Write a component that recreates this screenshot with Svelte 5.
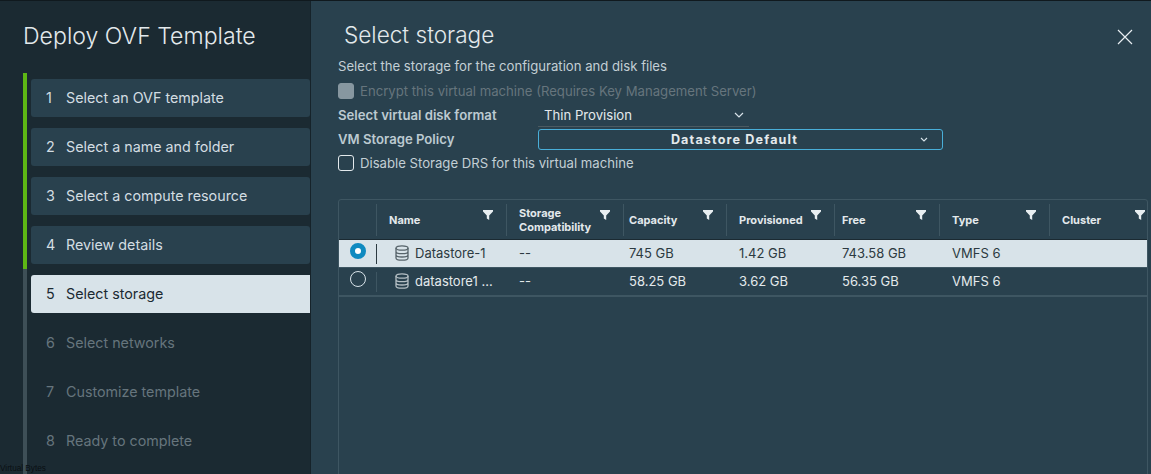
<script>
  const steps = [
    { n: 1, label: 'Select an OVF template', state: 'done' },
    { n: 2, label: 'Select a name and folder', state: 'done' },
    { n: 3, label: 'Select a compute resource', state: 'done' },
    { n: 4, label: 'Review details', state: 'done' },
    { n: 5, label: 'Select storage', state: 'current' },
    { n: 6, label: 'Select networks', state: 'todo' },
    { n: 7, label: 'Customize template', state: 'todo' },
    { n: 8, label: 'Ready to complete', state: 'todo' }
  ];
  const cols = [
    { label: 'Name', pad: 12 },
    { label: 'Storage Compatibility', pad: 12, two: true },
    { label: 'Capacity', pad: 5 },
    { label: 'Provisioned', pad: 12 },
    { label: 'Free', pad: 7 },
    { label: 'Type', pad: 12 },
    { label: 'Cluster', pad: 12 }
  ];
  const rows = [
    { name: 'Datastore-1', compat: '--', capacity: '745 GB', prov: '1.42 GB', free: '743.58 GB', type: 'VMFS 6', selected: true },
    { name: 'datastore1 ...', compat: '--', capacity: '58.25 GB', prov: '3.62 GB', free: '56.35 GB', type: 'VMFS 6', selected: false }
  ];
</script>

<div class="wizard">
  <aside class="side">
    <h1>Deploy OVF Template</h1>
    <ol class="steps">
      {#each steps as s}
        <li class="step {s.state}"><span class="num">{s.n}</span><span>{s.label}</span></li>
      {/each}
    </ol>
  </aside>

  <main class="main">
    <header class="head">
      <h2>Select storage</h2>
      <svg class="close" width="16" height="16" viewBox="0 0 16 16" aria-label="Close"><path d="M1 1l14 14M15 1L1 15" stroke="#e8eef1" stroke-width="1.2" fill="none"/></svg>
    </header>

    <div class="form">
      <p class="desc">Select the storage for the configuration and disk files</p>
      <div class="line disabled"><span class="box filled"></span><span>Encrypt this virtual machine (Requires Key Management Server)</span></div>
      <div class="line field">
        <span class="lbl">Select virtual disk format</span>
        <div class="sel plain"><span>Thin Provision</span>
          <svg width="10" height="6" viewBox="0 0 10 6"><path d="M1 1l4 4 4-4" stroke="#d8e3e9" stroke-width="1.2" fill="none"/></svg>
        </div>
      </div>
      <div class="line field">
        <span class="lbl">VM Storage Policy</span>
        <div class="sel policy"><span>Datastore Default</span>
          <svg width="8" height="5" viewBox="0 0 8 5"><path d="M1 1l3 3 3-3" stroke="#d8e3e9" stroke-width="1.1" fill="none"/></svg>
        </div>
      </div>
      <div class="line"><span class="box"></span><span class="drs">Disable Storage DRS for this virtual machine</span></div>
    </div>

    <div class="grid">
      <div class="row hdr">
        <div class="cell radio-cell"></div>
        {#each cols as c}
          <div class="cell th" style="padding-left:{c.pad}px">
            <span class:two={c.two}>{c.label}</span>
            <svg class="filter" width="10" height="10" viewBox="0 0 10 10"><path d="M0 0h10v1.5L6.2 5.5V10L3.8 8.6V5.5L0 1.5z" fill="#e8eef1"/></svg>
          </div>
        {/each}
      </div>
      {#each rows as r}
        <div class="row data" class:selected={r.selected}>
          <div class="cell radio-cell"><span class="radio" class:on={r.selected}></span></div>
          <div class="cell name" style="padding-left:18px">
            <svg width="14" height="16" viewBox="0 0 14 16" fill="none" stroke="currentColor" stroke-width="1.3" class="db">
              <ellipse cx="7" cy="3" rx="6" ry="2.2"/>
              <path d="M1 3v10c0 1.2 2.7 2.2 6 2.2s6-1 6-2.2V3M1 6.4c0 1.2 2.7 2.2 6 2.2s6-1 6-2.2M1 9.8c0 1.2 2.7 2.2 6 2.2s6-1 6-2.2"/>
            </svg>
            <span>{r.name}</span>
          </div>
          <div class="cell" style="padding-left:12px">{r.compat}</div>
          <div class="cell" style="padding-left:5px">{r.capacity}</div>
          <div class="cell" style="padding-left:12px">{r.prov}</div>
          <div class="cell" style="padding-left:7px">{r.free}</div>
          <div class="cell" style="padding-left:12px">{r.type}</div>
          <div class="cell"></div>
        </div>
      {/each}
    </div>
  </main>
  <span class="mark">Virtual Bytes</span>
</div>

<style>
  :global(body) { margin: 0; background: #1b2a32; }
  .wizard {
    position: relative;
    display: flex;
    width: 1151px;
    height: 474px;
    overflow: hidden;
    font-family: Inter, "Liberation Sans", sans-serif;
    color: #d8e3e9;
  }
  .wizard::before {
    content: "";
    position: absolute;
    inset: 0 0 auto 0;
    height: 1px;
    background: #10191e;
  }
  .side {
    width: 310px;
    flex: none;
    background: #1b2a32;
    padding-left: 23px;
    box-sizing: border-box;
  }
  h1 {
    margin: 0;
    padding-top: 21px;
    height: 73px;
    box-sizing: border-box;
    font-size: 23.1px;
    line-height: 30px;
    font-weight: 300;
    color: #e3e9ec;
  }
  .steps {
    list-style: none;
    margin: 0;
    padding: 6px 0 0 4px;
    height: 401px;
    box-sizing: border-box;
    background: linear-gradient(#5eb715 0 196px, #3e4f57 196px) left top / 4px 100% no-repeat;
    display: flex;
    flex-direction: column;
    gap: 11px;
  }
  .step {
    margin-left: 4px;
    height: 38px;
    flex: none;
    display: flex;
    align-items: center;
    padding: 0 0 2px 15px;
    box-sizing: border-box;
    border-radius: 3px 0 0 3px;
    font-size: 14.3px;
    color: #d3dde2;
  }
  .step.done { background: #29414e; border-radius: 3px; }
  .step.current { background: #d8e3e9; color: #1b2a32; }
  .step.todo { color: #66757d; }
  .num { width: 20px; flex: none; }

  .main {
    flex: 1;
    background: #29414e;
    border-left: 1px solid #16232a;
    box-sizing: border-box;
    padding-left: 27px;
    min-width: 0;
  }
  .head {
    height: 59px;
    display: flex;
    justify-content: space-between;
    padding: 20px 18px 0 6px;
    box-sizing: border-box;
  }
  h2 {
    margin: 0;
    font-size: 22.6px;
    line-height: 30px;
    font-weight: 300;
    color: #e3e9ec;
  }
  .close { margin-top: 9px; }
  .form { font-size: 13.15px; color: #c3cfd5; }
  .desc { margin: 0; height: 15px; line-height: 15px; }
  .line { display: flex; align-items: center; height: 24px; }
  .disabled { margin-top: 5px; color: #66757d; }
  .box {
    width: 16px;
    height: 16px;
    border: 1px solid #e3e9ec;
    border-radius: 3px;
    box-sizing: border-box;
    margin-right: 6px;
    flex: none;
  }
  .box.filled { background: #8797a0; border-color: #8797a0; }
  .lbl { width: 200px; font-weight: 600; flex: none; color: #bccad1; }
  .sel { display: flex; align-items: center; box-sizing: border-box; color: #e3e9ec; }
  .plain {
    width: 211px;
    height: 24px;
    padding: 0 5px 0 6px;
    justify-content: space-between;
    border-bottom: 1px solid #4c5a60;
  }
  .policy {
    width: 405px;
    height: 21px;
    margin-top: 1px;
    padding-right: 12px;
    border: 1px solid #49afd9;
    border-radius: 3px;
    position: relative;
    justify-content: center;
    font-weight: 700;
    font-size: 12.6px;
    letter-spacing: 1.15px;
  }
  .policy svg { position: absolute; right: 14px; top: 7px; }

  .grid {
    width: 810px;
    height: 400px;
    margin-top: 24px;
    border: 1px solid #3e5662;
    border-radius: 3px;
    box-sizing: border-box;
  }
  .row {
    display: grid;
    grid-template-columns: 38px 130px 117px 103px 108px 105px 110px 1fr;
  }
  .hdr { height: 39px; }
  .cell { display: flex; align-items: center; position: relative; box-sizing: border-box; min-width: 0; font-size: 13px; }
  .th {
    font-size: 11px;
    font-weight: 700;
    color: #e3e9ec;
    line-height: 14px;
  }
  .th::before, .data .radio-cell::after {
    content: "";
    position: absolute;
    top: 4px;
    bottom: 3px;
    width: 1px;
    background: #3e5662;
  }
  .th::before { left: -1px; }
  .data .radio-cell::after { right: 0; }
  .two { width: 80px; }
  .filter { position: absolute; right: 14px; top: 10px; }
  .th:last-child .filter { right: 2px; }
  .data { height: 28px; border-top: 1px solid #3e5662; box-sizing: border-box; color: #e3e9ec; }
  .data .cell { padding-bottom: 1px; }
  .data:last-child { border-bottom: 2px solid #3e5662; height: 30px; }
  .selected { background: #d8e3e9; color: #2c3a41; border-top-color: #1b2a32; }
  .selected .radio-cell::after { background: #2c3a41; }
  .radio {
    width: 16px;
    height: 16px;
    border-radius: 50%;
    border: 1px solid #d8e3e9;
    box-sizing: border-box;
    margin: -4px 0 0 11px;
  }
  .radio.on { border: 5px solid #0f8ac0; background: #fff; }
  .db { margin-right: 6px; flex: none; opacity: .75; }
  .mark {
    position: absolute;
    left: 0;
    bottom: 0;
    font-family: "Liberation Sans", sans-serif;
    font-size: 8.2px;
    line-height: 11px;
    color: #0a0f12;
  }
</style>
